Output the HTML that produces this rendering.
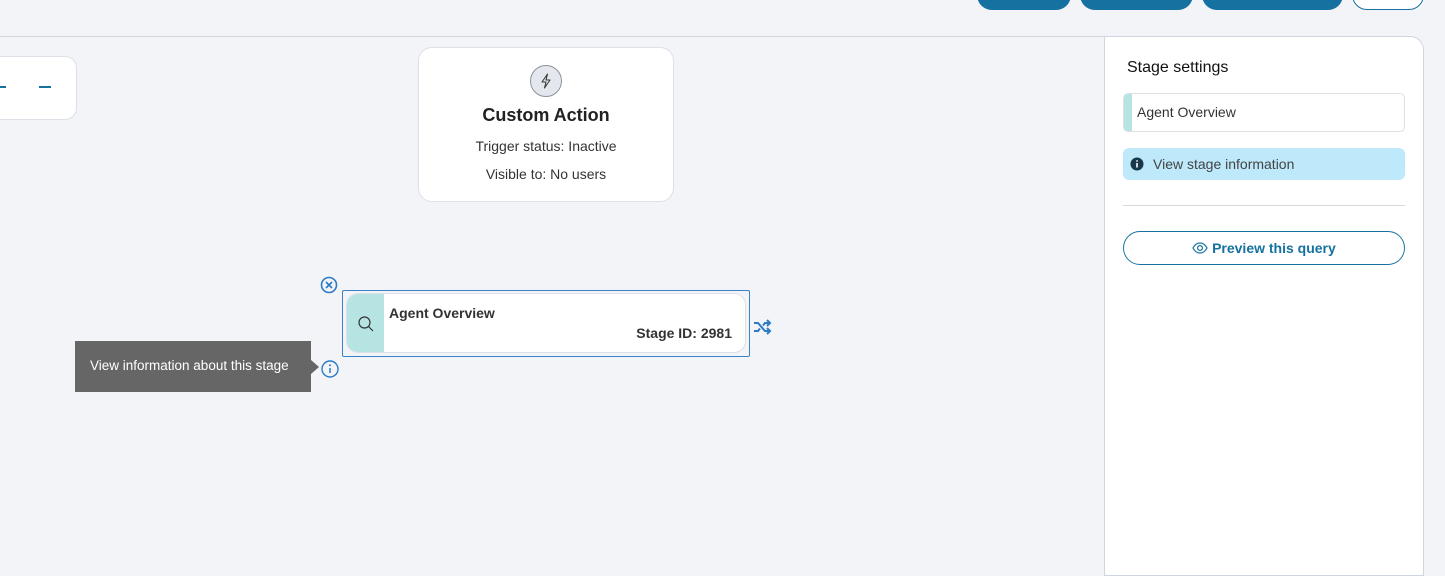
<!DOCTYPE html>
<html><head><style>
html,body{height:561px}
body{margin:0;width:1445px;background:#f3f4f8;font-family:"Liberation Sans",sans-serif;position:relative;overflow:hidden;color:#222}
.a{position:absolute;box-sizing:border-box}
.btn{top:-20px;height:30px;border-radius:15px;background:#1572a0}
</style></head><body>
<div class="a btn" style="left:977px;width:94px"></div>
<div class="a btn" style="left:1080px;width:113px"></div>
<div class="a btn" style="left:1202px;width:141px"></div>
<div class="a btn" style="left:1352px;width:72px;background:#fff;border:1px solid #1572a0"></div>
<div class="a" style="left:0;top:36px;width:1105px;height:1px;background:#d0d6de"></div>
<div class="a" style="left:-20px;top:56px;width:97px;height:64px;background:#fff;border:1px solid #dde0e6;border-radius:12px"></div>
<div class="a" style="left:0;top:86px;width:6px;height:2px;background:#1572a0"></div>
<div class="a" style="left:39px;top:86px;width:12px;height:2px;background:#1572a0"></div>
<div class="a" style="left:418px;top:47px;width:256px;height:155px;background:#fff;border:1px solid #dde0e6;border-radius:14px;text-align:center">
<div class="a" style="left:111px;top:17px;width:32px;height:32px;border-radius:50%;background:#e4e8ee;border:1px solid #8a929c"><svg width="30" height="30" viewBox="0 0 30 30" style="position:absolute;left:0;top:0"><path d="M16.5 8 L11 16 H15 L13.5 22 L19 14 H15 Z" fill="none" stroke="#333" stroke-width="1" stroke-linejoin="round"/></svg></div>
<div class="a" style="left:0;width:100%;top:57px;font-size:18px;font-weight:bold;color:#222">Custom Action</div>
<div class="a" style="left:0;width:100%;top:90px;font-size:14px;color:#333">Trigger status: Inactive</div>
<div class="a" style="left:0;width:100%;top:118px;font-size:14px;color:#333">Visible to: No users</div>
</div>
<svg class="a" style="left:320px;top:276px" width="18" height="18" viewBox="0 0 18 18"><circle cx="9" cy="9" r="7.5" fill="none" stroke="#2c7bc6" stroke-width="1.6"/><path d="M6 6L12 12M12 6L6 12" stroke="#2c7bc6" stroke-width="1.6"/></svg>
<div class="a" style="left:342px;top:290px;width:408px;height:67px;border:1px solid #3a82c8;border-radius:2px"></div>
<div class="a" style="left:346px;top:293px;width:400px;height:60px;background:#fff;border:1px solid #dde0e6;border-radius:12px;overflow:hidden">
<div class="a" style="left:0;top:0;width:37px;height:60px;background:#b5e4e2"></div>
<svg class="a" style="left:10px;top:21px" width="18" height="18" viewBox="0 0 18 18"><circle cx="7.5" cy="7.5" r="5.5" fill="none" stroke="#333" stroke-width="1.2"/><path d="M11.5 11.5L16 16" stroke="#333" stroke-width="1.2"/></svg>
<div class="a" style="left:42px;top:11px;font-size:14px;font-weight:bold;color:#333">Agent Overview</div>
<div class="a" style="right:13px;top:31px;font-size:14px;font-weight:bold;color:#333">Stage ID: 2981</div>
</div>
<svg class="a" style="left:753px;top:318px" width="20" height="18" viewBox="0 0 20 18"><path d="M1 5H5L12 13H17M1 13H5L7 10.5M10 7.5L12 5H17M14 2L17 5L14 8M14 10L17 13L14 16" fill="none" stroke="#2c7bc6" stroke-width="2"/></svg>
<div class="a" style="left:75px;top:341px;width:236px;height:51px;background:#666;color:#fff;font-size:13.5px;padding:17px 0 0 15px">View information about this stage</div>
<div class="a" style="left:311px;top:360px;width:0;height:0;border-top:7px solid transparent;border-bottom:7px solid transparent;border-left:8px solid #666"></div>
<svg class="a" style="left:320px;top:359px" width="20" height="20" viewBox="0 0 20 20"><circle cx="10" cy="10" r="8" fill="none" stroke="#2c7bc6" stroke-width="1.4"/><path d="M10 9V14" stroke="#2c7bc6" stroke-width="1.5"/><circle cx="10" cy="6.3" r="1" fill="#2c7bc6"/></svg>
<div class="a" style="left:1104px;top:36px;width:320px;height:540px;background:#fff;border:1px solid #d0d6de;border-radius:0 14px 0 0"></div>
<div class="a" style="left:1127px;top:59px;font-size:16px;color:#111">Stage settings</div>
<div class="a" style="left:1123px;top:93px;width:282px;height:39px;border:1px solid #dde0e6;border-radius:5px;overflow:hidden;background:#fff"><div class="a" style="left:0;top:0;width:8px;height:39px;background:#b5e4e2"></div><div class="a" style="left:13px;top:10px;font-size:14px;color:#333">Agent Overview</div></div>
<div class="a" style="left:1123px;top:148px;width:282px;height:32px;background:#bde9fb;border-radius:6px">
<svg class="a" style="left:7px;top:9px" width="14" height="14" viewBox="0 0 14 14"><circle cx="7" cy="7" r="6.5" fill="#17394a"/><path d="M7 6V10.5" stroke="#fff" stroke-width="1.6"/><circle cx="7" cy="4" r="0.9" fill="#fff"/></svg>
<div class="a" style="left:30px;top:8px;font-size:14px;color:#444">View stage information</div></div>
<div class="a" style="left:1123px;top:205px;width:282px;height:1px;background:#d6d9de"></div>
<div class="a" style="left:1123px;top:231px;width:282px;height:34px;border:1px solid #1572a0;border-radius:17px;text-align:center;font-size:14px;font-weight:bold;color:#1572a0;padding-top:8px">
<svg width="16" height="12" viewBox="0 0 16 12" style="vertical-align:-1px"><path d="M1 6C3 2 5.5 1 8 1S13 2 15 6C13 10 10.5 11 8 11S3 10 1 6Z" fill="none" stroke="#1572a0" stroke-width="1.2"/><circle cx="8" cy="6" r="2.4" fill="none" stroke="#1572a0" stroke-width="1.2"/></svg> Preview this query</div>
</body></html>
